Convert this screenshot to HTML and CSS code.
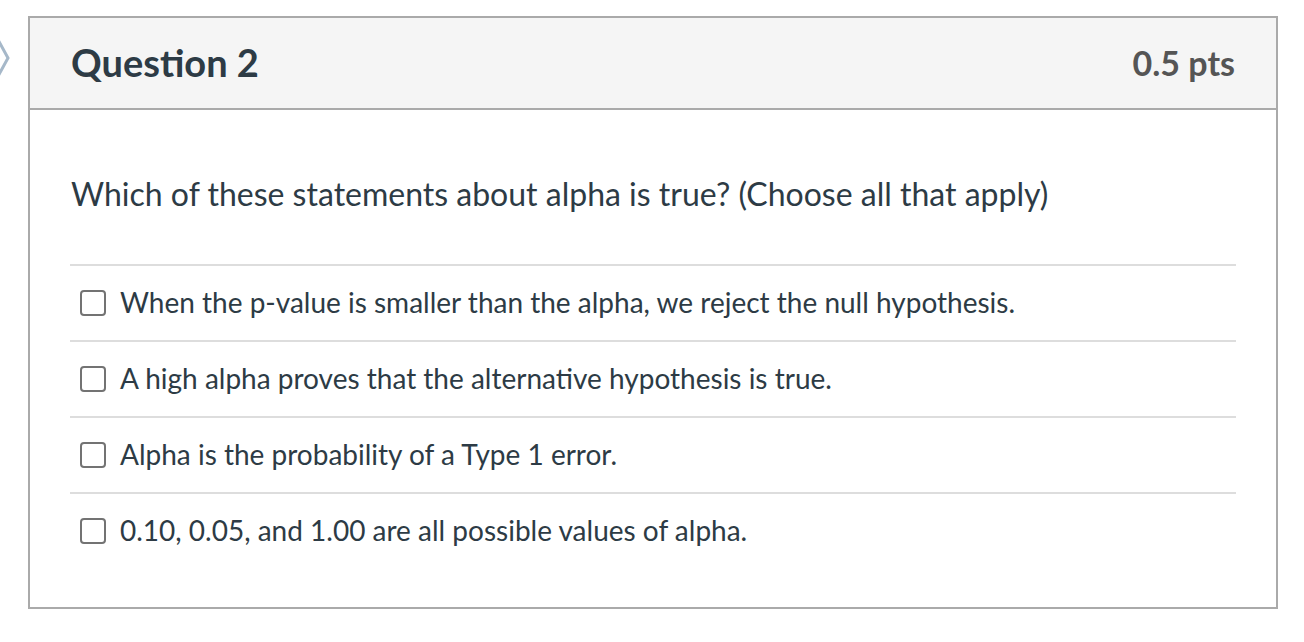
FILE: index.html
```html
<!DOCTYPE html>
<html>
<head>
<meta charset="utf-8">
<link rel="stylesheet" href="styles.css">
</head>
<body>
<svg class="flag" width="12" height="46" viewBox="0 0 12 46">
  <path d="M-3 3 L8 23 L-3 43" fill="none" stroke="#a6b8c9" stroke-width="3" stroke-linejoin="miter"/>
  <path d="M-4 7 L5 23 L-4 39" fill="none" stroke="#ffffff" stroke-width="1"/>
</svg>
<div class="question">
  <div class="header">
    <h2 class="title">Question 2</h2>
    <div class="pts">0.5 pts</div>
  </div>
  <div class="body">
    <p class="text">Which of these statements about alpha is true? (Choose all that apply)</p>
    <div class="answers">
      <label class="answer"><span class="box"></span><span>When the p-value is smaller than the alpha, we reject the null hypothesis.</span></label>
      <label class="answer"><span class="box"></span><span>A high alpha proves that the alternative hypothesis is true.</span></label>
      <label class="answer"><span class="box"></span><span>Alpha is the probability of a Type 1 error.</span></label>
      <label class="answer"><span class="box"></span><span>0.10, 0.05, and 1.00 are all possible values of alpha.</span></label>
    </div>
  </div>
</div>
</body>
</html>
```
FILE: styles.css
```css
html, body {
  margin: 0;
  padding: 0;
  background: #fff;
}
body {
  font-family: Lato, "Open Sans", sans-serif;
  color: #2d3b45;
  padding: 16px 26px 0 28px;
  position: relative;
}
.flag {
  position: absolute;
  left: 0;
  top: 35px;
}
.question {
  border: 2px solid #aaaaaa;
  width: 1246px;
}
.header {
  background: #f5f5f5;
  border-bottom: 2px solid #aaaaaa;
  height: 90px;
  display: flex;
  align-items: center;
  justify-content: space-between;
  padding: 0 41px 2px 41px;
  box-sizing: border-box;
  height: 92px;
}
.title {
  margin: 0;
  font-size: 38px;
  font-weight: 700;
  color: #2d3b45;
}
.pts {
  font-size: 34px;
  font-weight: 700;
  color: #555;
}
.body {
  padding: 64px 40px 39px 40px;
}
.text {
  margin: 0 0 50px 1px;
  font-size: 32px;
  line-height: 40px;
}
.answer {
  display: flex;
  align-items: center;
  gap: 14px;
  border-top: 2px solid #dddddd;
  box-sizing: border-box;
  height: 76px;
  padding: 0 0 3px 10px;
  font-size: 28px;
}
.box {
  width: 22px;
  height: 22px;
  border: 2px solid #737373;
  border-radius: 4px;
  flex: none;
  margin-top: 3px;
}
```
